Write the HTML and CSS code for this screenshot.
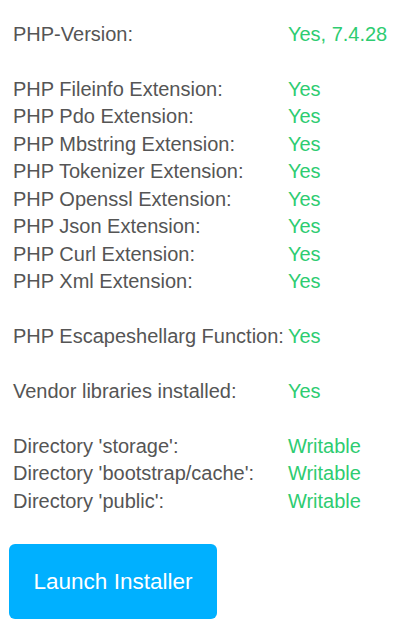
FILE: index.html
```html
<!DOCTYPE html>
<html>
<head>
<meta charset="utf-8">
<link rel="stylesheet" href="styles.css">
</head>
<body>
<div class="page">
  <div class="checks">
    <div class="label">PHP-Version:</div><div class="ok">Yes, 7.4.28</div>
    <div class="spacer"></div>
    <div class="label">PHP Fileinfo Extension:</div><div class="ok">Yes</div>
    <div class="label">PHP Pdo Extension:</div><div class="ok">Yes</div>
    <div class="label">PHP Mbstring Extension:</div><div class="ok">Yes</div>
    <div class="label">PHP Tokenizer Extension:</div><div class="ok">Yes</div>
    <div class="label">PHP Openssl Extension:</div><div class="ok">Yes</div>
    <div class="label">PHP Json Extension:</div><div class="ok">Yes</div>
    <div class="label">PHP Curl Extension:</div><div class="ok">Yes</div>
    <div class="label">PHP Xml Extension:</div><div class="ok">Yes</div>
    <div class="spacer"></div>
    <div class="label">PHP Escapeshellarg Function:</div><div class="ok">Yes</div>
    <div class="spacer"></div>
    <div class="label">Vendor libraries installed:</div><div class="ok">Yes</div>
    <div class="spacer"></div>
    <div class="label">Directory 'storage':</div><div class="ok">Writable</div>
    <div class="label">Directory 'bootstrap/cache':</div><div class="ok">Writable</div>
    <div class="label">Directory 'public':</div><div class="ok">Writable</div>
  </div>
  <button class="launch">Launch Installer</button>
</div>
</body>
</html>
```
FILE: styles.css
```css
html, body {
  margin: 0;
  padding: 0;
  background: #ffffff;
}
.page {
  padding: 21px 0 0 9px;
  font-family: "Liberation Sans", Arial, sans-serif;
}
.checks {
  display: grid;
  grid-template-columns: max-content auto;
  column-gap: 4px;
  padding-left: 4px;
  font-size: 20px;
  line-height: 27.45px;
}
.label {
  color: #555555;
}
.ok {
  color: #2ecc71;
}
.spacer {
  grid-column: 1 / -1;
  height: 27.45px;
}
.launch {
  display: block;
  margin-top: 29px;
  width: 208px;
  height: 75px;
  border: none;
  border-radius: 6px;
  background: #00b0ff;
  color: #ffffff;
  font-family: "Liberation Sans", Arial, sans-serif;
  font-size: 22.5px;
  padding: 0;
}
```
